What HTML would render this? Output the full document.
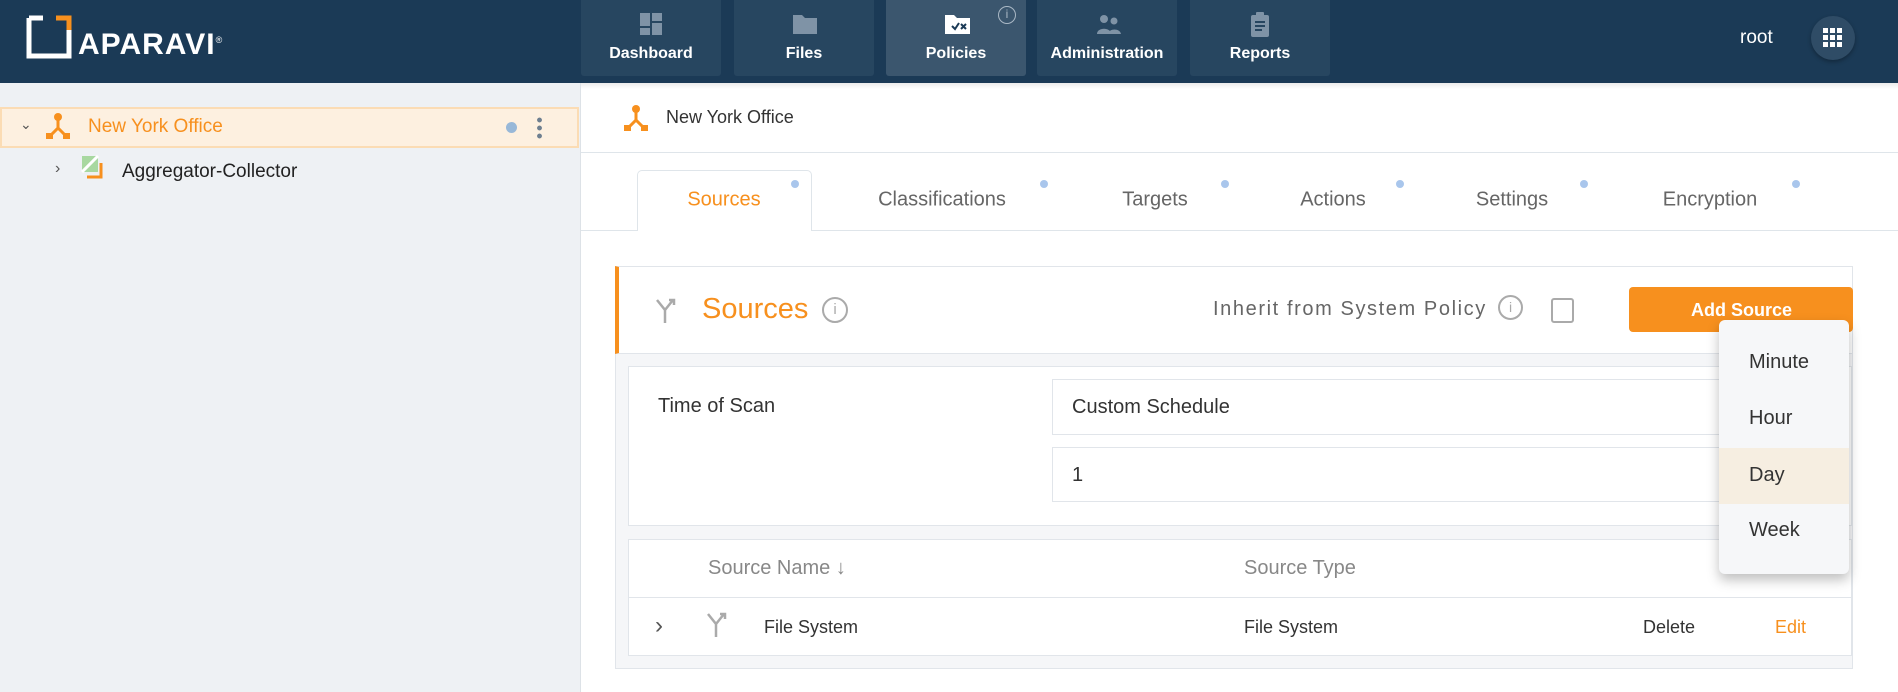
<!DOCTYPE html>
<html><head><meta charset="utf-8"><style>
*{box-sizing:border-box;margin:0;padding:0}
body{width:1898px;height:692px;overflow:hidden;font-family:"Liberation Sans",sans-serif;background:#fff;position:relative;color:#333}
.abs{position:absolute}
#hdr{left:0;top:0;width:1898px;height:83px;background:#1b3a56}
.nav{top:0;height:76px;width:140px;background:#274660;color:#fff;font-size:16px;font-weight:bold;text-align:center;border-radius:0 0 3px 3px}
.nav span{position:absolute;left:0;right:0;top:45px}
.nav svg{position:absolute;left:58px;top:12px}
#side{left:0;top:83px;width:581px;height:609px;background:#eef1f4;border-right:1px solid #dde2e7}
.tab{top:200px;font-size:20px;color:#666;transform:translate(-50%,-50%)}
.dot{width:8px;height:8px;border-radius:50%;background:#a9c6ec}
.dd{left:1749px;font-size:20px;color:#333}
</style></head><body>
<div id="hdr" class="abs"></div>
<svg class="abs" style="left:26px;top:15px" width="46" height="44" viewBox="0 0 46 44"><path d="M30 3h13v38H17" fill="none" stroke="#fff" stroke-width="5"/><path d="M3 3h14M3 3v38h14" fill="none" stroke="#fff" stroke-width="5"/><path d="M30 3h13v12" fill="none" stroke="#f7901e" stroke-width="5"/></svg>
<div class="abs" style="left:78px;top:28px;color:#fff;font-size:30px;font-weight:bold;letter-spacing:1px">APARAVI<sup style="font-size:9px;font-weight:normal">®</sup></div>
<div class="abs nav" style="left:581px"><svg width="24" height="24" viewBox="0 0 24 24"><path d="M1 1h10v13H1zM13 1h10v8H13zM13 11h10v12H13zM1 16h10v7H1z" fill="#7f93a6"/></svg><span>Dashboard</span></div>
<div class="abs nav" style="left:734px"><svg width="26" height="24" viewBox="0 0 26 24"><path d="M1 3h9l3 3h12v16H1z" fill="#7f93a6"/></svg><span>Files</span></div>
<div class="abs nav" style="left:886px;background:#3b566e"><svg width="28" height="24" viewBox="0 0 28 24"><path d="M1 3h9l3 3h13v16H1z" fill="#fff"/><path d="M8 14l3 3 4-6M17 12l5 5M22 12l-5 5" stroke="#1b3a56" stroke-width="2" fill="none"/></svg><span>Policies</span><div class="abs" style="left:112px;top:6px;width:18px;height:18px;border:1.5px solid #aab8c5;border-radius:50%;color:#aab8c5;font-size:12px;line-height:15px;font-weight:normal">i</div></div>
<div class="abs nav" style="left:1037px"><svg width="28" height="24" viewBox="0 0 28 24"><circle cx="9" cy="7" r="4" fill="#7f93a6"/><circle cx="19" cy="9" r="3.5" fill="#7f93a6"/><path d="M2 22c0-7 14-7 14 0zM13 22c1-6 12-6 13 0z" fill="#7f93a6"/></svg><span>Administration</span></div>
<div class="abs nav" style="left:1190px"><svg width="24" height="26" viewBox="0 0 24 26"><rect x="3" y="3" width="18" height="22" rx="2" fill="#7f93a6"/><rect x="8" y="0" width="8" height="5" rx="1" fill="#7f93a6"/><path d="M7 10h10M7 14h10M7 18h7" stroke="#274660" stroke-width="2"/></svg><span>Reports</span></div>
<div class="abs" style="left:1740px;top:27px;color:#fff;font-size:19px">root</div>
<div class="abs" style="left:1811px;top:16px;width:44px;height:44px;border-radius:50%;background:#2f4c66;box-shadow:0 2px 4px rgba(0,0,0,.3)"><svg class="abs" style="left:12px;top:12px" width="20" height="20" viewBox="0 0 20 20"><g fill="#fff"><rect x="0" y="0" width="5" height="5"/><rect x="7" y="0" width="5" height="5"/><rect x="14" y="0" width="5" height="5"/><rect x="0" y="7" width="5" height="5"/><rect x="7" y="7" width="5" height="5"/><rect x="14" y="7" width="5" height="5"/><rect x="0" y="14" width="5" height="5"/><rect x="7" y="14" width="5" height="5"/><rect x="14" y="14" width="5" height="5"/></g></svg></div>

<div id="side" class="abs"></div>
<div class="abs" style="left:0;top:107px;width:579px;height:41px;background:#fdf0e0;border:2px solid #fbdcb4"></div>
<div class="abs" style="left:20px;top:116px;color:#555;font-size:14px">⌄</div>
<svg class="abs" style="left:46px;top:112px" width="24" height="28" viewBox="0 0 24 28"><circle cx="12" cy="5" r="4" fill="#f7901e"/><path d="M12 8v8L4 24M12 16l8 8" stroke="#f7901e" stroke-width="3" fill="none"/><rect x="0" y="21" width="7" height="6" fill="#f7901e"/><rect x="17" y="21" width="7" height="6" fill="#f7901e"/></svg>
<div class="abs" style="left:88px;top:116px;color:#f7901e;font-size:19px">New York Office</div>
<div class="abs dot" style="left:506px;top:122px;width:11px;height:11px;background:#98b8d8"></div>
<div class="abs" style="left:537px;top:116px;width:5px;height:24px;background:radial-gradient(circle,#6e7f90 2.2px,transparent 2.6px) 0 0/5px 8px"></div>
<div class="abs" style="left:55px;top:160px;color:#555;font-size:16px">›</div>
<svg class="abs" style="left:81px;top:155px" width="26" height="26" viewBox="0 0 26 26"><path d="M1 1h16v16H1z" fill="#a8d8a0"/><path d="M1 17L17 1" stroke="#fff" stroke-width="3"/><path d="M20 8v14H6" stroke="#f7901e" stroke-width="3" fill="none"/></svg>
<div class="abs" style="left:122px;top:161px;color:#222;font-size:19px">Aggregator-Collector</div>

<div class="abs" style="left:581px;top:83px;width:1317px;height:6px;background:linear-gradient(rgba(0,0,0,.08),transparent)"></div>
<svg class="abs" style="left:623px;top:104px" width="26" height="28" viewBox="0 0 24 28"><circle cx="12" cy="5" r="4" fill="#f7901e"/><path d="M12 8v8L4 24M12 16l8 8" stroke="#f7901e" stroke-width="3" fill="none"/><rect x="0" y="21" width="7" height="6" fill="#f7901e"/><rect x="17" y="21" width="7" height="6" fill="#f7901e"/></svg>
<div class="abs" style="left:666px;top:107px;font-size:18px;color:#333">New York Office</div>
<div class="abs" style="left:581px;top:152px;width:1317px;height:1px;background:#dfe5ea"></div>
<div class="abs" style="left:581px;top:230px;width:1317px;height:1px;background:#dfe5ea"></div>
<div class="abs" style="left:637px;top:170px;width:175px;height:61px;background:#fff;border:1px solid #dfe5ea;border-bottom:none;border-radius:5px 5px 0 0"></div>
<div class="abs tab" style="left:724px;color:#f7901e">Sources</div>
<div class="abs tab" style="left:942px">Classifications</div>
<div class="abs tab" style="left:1155px">Targets</div>
<div class="abs tab" style="left:1333px">Actions</div>
<div class="abs tab" style="left:1512px">Settings</div>
<div class="abs tab" style="left:1710px">Encryption</div>
<div class="abs dot" style="left:791px;top:180px"></div>
<div class="abs dot" style="left:1040px;top:180px"></div>
<div class="abs dot" style="left:1221px;top:180px"></div>
<div class="abs dot" style="left:1396px;top:180px"></div>
<div class="abs dot" style="left:1580px;top:180px"></div>
<div class="abs dot" style="left:1792px;top:180px"></div>

<div class="abs" style="left:615px;top:266px;width:1238px;height:403px;background:#f5f6f8;border:1px solid #e1e5ea"></div>
<div class="abs" style="left:615px;top:266px;width:1238px;height:88px;background:#fff;border:1px solid #e1e5ea;border-left:4px solid #f7901e"></div>
<svg class="abs" style="left:653px;top:298px" width="24" height="26" viewBox="0 0 24 26"><path d="M4 2l8 10v13M20 2l-8 10M16 2h5v5" stroke="#aaa" stroke-width="2.5" fill="none"/></svg>
<div class="abs" style="left:702px;top:293px;color:#f7901e;font-size:29px">Sources</div>
<div class="abs" style="left:822px;top:297px;width:26px;height:26px;border:2px solid #aaa;border-radius:50%;color:#aaa;font-size:15px;text-align:center;line-height:22px">i</div>
<div class="abs" style="left:1213px;top:298px;font-size:20px;color:#666;letter-spacing:1.6px">Inherit from System Policy</div>
<div class="abs" style="left:1498px;top:295px;width:25px;height:25px;border:2px solid #aaa;border-radius:50%;color:#aaa;font-size:14px;text-align:center;line-height:21px">i</div>
<div class="abs" style="left:1551px;top:298px;width:23px;height:25px;border:2px solid #aaa;border-radius:3px;background:#fff"></div>
<div class="abs" style="left:1629px;top:287px;width:224px;height:45px;background:#f7901e;border-radius:4px;color:#fff;font-weight:bold;font-size:18px;padding:13px 0 0 62px">Add Source</div>

<div class="abs" style="left:628px;top:366px;width:1224px;height:160px;background:#fff;border:1px solid #e1e5ea"></div>
<div class="abs" style="left:658px;top:395px;font-size:20px;color:#333">Time of Scan</div>
<div class="abs" style="left:1052px;top:379px;width:780px;height:56px;border:1px solid #e1e5ea;background:#fff;font-size:20px;padding:16px 0 0 19px">Custom Schedule</div>
<div class="abs" style="left:1052px;top:447px;width:780px;height:55px;border:1px solid #e1e5ea;background:#fff;font-size:20px;padding:16px 0 0 19px">1</div>

<div class="abs" style="left:628px;top:539px;width:1224px;height:117px;background:#fff;border:1px solid #e1e5ea"></div>
<div class="abs" style="left:628px;top:597px;width:1224px;height:1px;background:#e1e5ea"></div>
<div class="abs" style="left:708px;top:557px;font-size:20px;color:#888">Source Name ↓</div>
<div class="abs" style="left:1244px;top:557px;font-size:20px;color:#888">Source Type</div>
<div class="abs" style="left:655px;top:612px;font-size:24px;color:#555">›</div>
<svg class="abs" style="left:704px;top:612px" width="24" height="26" viewBox="0 0 24 26"><path d="M4 2l8 10v13M20 2l-8 10M16 2h5v5" stroke="#aaa" stroke-width="2.5" fill="none"/></svg>
<div class="abs" style="left:764px;top:617px;font-size:18px;color:#333">File System</div>
<div class="abs" style="left:1244px;top:617px;font-size:18px;color:#333">File System</div>
<div class="abs" style="left:1643px;top:617px;font-size:18px;color:#333">Delete</div>
<div class="abs" style="left:1775px;top:617px;font-size:18px;color:#f7901e">Edit</div>

<div class="abs" style="left:1719px;top:320px;width:130px;height:254px;background:#f6f7f9;border-radius:6px;box-shadow:0 6px 12px rgba(0,0,0,.25)"></div>
<div class="abs" style="left:1719px;top:448px;width:130px;height:56px;background:#f6eee1"></div>
<div class="abs dd" style="top:351px">Minute</div>
<div class="abs dd" style="top:407px">Hour</div>
<div class="abs dd" style="top:464px">Day</div>
<div class="abs dd" style="top:519px">Week</div>
</body></html>
